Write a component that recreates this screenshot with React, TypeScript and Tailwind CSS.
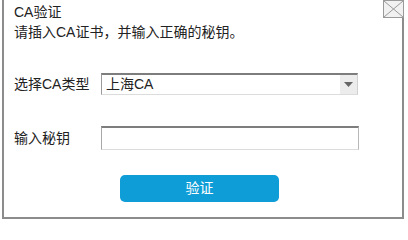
import React from "react";

export default function App() {
  const font = { fontFamily: '"Liberation Sans", "Noto Sans CJK SC", sans-serif' };
  return (
    <div className="w-[408px] h-[222px] bg-white pl-[2px]" style={font}>
      <div className="relative w-[402px] h-[219px] border-l-2 border-r-2 border-b-2 border-[#8c8c8c] bg-white pt-[4px] pl-[10px] text-[#222]">
        <div className="absolute top-0 right-[-2px] w-[21px] h-[18px] border border-[#9a9a9a] bg-[#f1f1f1]">
          <svg width="19" height="16" viewBox="0 0 19 16" className="block">
            <line x1="0" y1="0" x2="19" y2="16" stroke="#9a9a9a" strokeWidth="1" />
            <line x1="19" y1="0" x2="0" y2="16" stroke="#9a9a9a" strokeWidth="1" />
          </svg>
        </div>
        <div className="h-[16px] leading-[16px] text-[14px]">CA验证</div>
        <div className="mt-[3px] h-[18px] leading-[18px] text-[14px]">请插入CA证书，并输入正确的秘钥。</div>
        <div className="mt-[32px] flex items-center">
          <div className="w-[87px] text-[14px] leading-[18px] whitespace-nowrap">选择CA类型</div>
          <div className="flex w-[257px] h-[22px] border-t-2 border-t-[#7d7d7d] border-l border-l-[#9a9a9a] border-r border-r-[#d0d0d0] border-b border-b-[#dcdcdc] bg-white">
            <div className="flex-1 pl-[4px] text-[14px] leading-[19px]">上海CA</div>
            <div className="w-[17px] h-full bg-[#ececec] flex items-center justify-center">
              <svg width="9" height="5" viewBox="0 0 9 5">
                <polygon points="0,0 9,0 4.5,5" fill="#666" />
              </svg>
            </div>
          </div>
        </div>
        <div className="mt-[31px] flex items-center">
          <div className="w-[87px] text-[14px] leading-[18px]">输入秘钥</div>
          <div className="w-[258px] h-[24px] border-t-2 border-t-[#7d7d7d] border-l border-l-[#a8a8a8] border-r border-r-[#b8b8b8] border-b border-b-[#dcdcdc] bg-white"></div>
        </div>
        <div className="mt-[25px] pl-[106px]">
          <button className="w-[159px] h-[27px] rounded-[5px] bg-[#0f9dd7] text-white text-[14px] leading-[27px]">验证</button>
        </div>
      </div>
    </div>
  );
}
